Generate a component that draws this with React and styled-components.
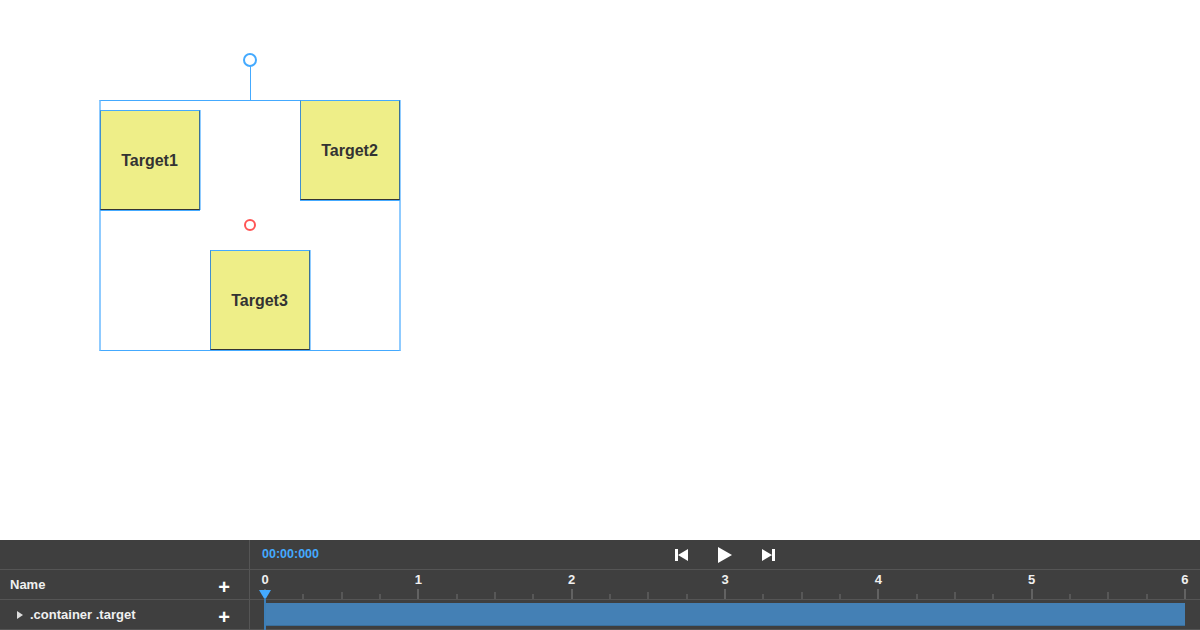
import React from 'react';
import styled, { createGlobalStyle } from 'styled-components';

const GlobalStyle = createGlobalStyle`
    html, body {
        margin: 0;
        padding: 0;
        background: #ffffff;
    }
    body {
        font-family: "Liberation Sans", Arial, sans-serif;
    }
`

const Page = styled.div`
    width: 1200px;
    height: 630px;
    display: flex;
    flex-direction: column;
    overflow: hidden;
`

const Stage = styled.div`
    position: relative;
    flex: 0 0 540px;
`

const Selection = styled.div`
    position: absolute;
    left: 99px;
    top: 100px;
    width: 302px;
    height: 251px;
    box-sizing: border-box;
    border-top: 1px solid #44aaff;
    border-bottom: 1px solid #44aaff;
    border-left: 2px solid #8fcbff;
    border-right: 2px solid #8fcbff;
`

const RotationLine = styled.div`
    position: absolute;
    left: 250px;
    top: 66px;
    width: 1px;
    height: 34px;
    background: #44aaff;
`

const RotationHandle = styled.div`
    position: absolute;
    left: 243px;
    top: 53px;
    width: 14px;
    height: 14px;
    box-sizing: border-box;
    border: 2px solid #44aaff;
    border-radius: 50%;
    background: #fff;
`

const Origin = styled.div`
    position: absolute;
    left: 244px;
    top: 219px;
    width: 12px;
    height: 12px;
    box-sizing: border-box;
    border: 2px solid #ff5555;
    border-radius: 50%;
`

const Target = styled.div`
    position: absolute;
    left: ${props => props.$x}px;
    top: ${props => props.$y}px;
    width: 100px;
    height: 100px;
    box-sizing: border-box;
    display: flex;
    align-items: center;
    justify-content: center;
    padding: 2px 1px 0 0;
    background: #eeee88;
    color: #333333;
    font-size: 16px;
    font-weight: bold;
    border: 1px solid #44aaff;
    border-left-color: #3f8fd0;
    border-right-color: #3a6f96;
    border-bottom-color: #333333;
    box-shadow: 0 1px 0 #44aaff, 1px 0 0 #8fcbff;
`

const Timeline = styled.div`
    flex: 0 0 90px;
    position: relative;
    display: flex;
    flex-direction: column;
    background: #3f3f3f;
    color: #ffffff;
    font-size: 13px;
    font-weight: bold;
`

const Row = styled.div`
    flex: 0 0 30px;
    box-sizing: border-box;
    display: flex;
    border-bottom: 1px solid #555555;
`

const Side = styled.div`
    flex: 0 0 250px;
    box-sizing: border-box;
    display: flex;
    align-items: center;
    justify-content: space-between;
    padding: 0 20px 0 ${props => props.$indent || 10}px;
    border-right: 1px solid #555555;
`

const SideLabel = styled.div`
    display: flex;
    align-items: center;
    gap: 7px;
    color: #f0f0f0;
`

const Caret = styled.span`
    width: 0;
    height: 0;
    border-left: 6px solid #dddddd;
    border-top: 4px solid transparent;
    border-bottom: 4px solid transparent;
`

const AddButton = styled.span`
    width: 10px;
    display: flex;
    justify-content: center;
    font-size: 20px;
    line-height: 18px;
    margin-top: 4px;
`

const Controls = styled.div`
    flex: 1;
    position: relative;
    display: flex;
    align-items: center;
    justify-content: center;
    gap: 28px;
`

const Clock = styled.div`
    position: absolute;
    left: 12px;
    top: 7px;
    color: #44aaff;
    font-size: 12.5px;
    line-height: 15px;
`

const ControlIcon = styled.svg`
    display: block;
    fill: #ffffff;
`

const Ruler = styled.div`
    flex: 1;
    position: relative;
    padding: 0 15px;
`

const Labels = styled.div`
    display: flex;
    justify-content: space-between;
    padding-top: 2px;
    line-height: 15px;
    color: #f0f0f0;
`

const Label = styled.span`
    width: 0;
    display: flex;
    justify-content: center;
`

const Ticks = styled.div`
    position: absolute;
    left: 14px;
    right: 14px;
    bottom: 0;
    display: flex;
    justify-content: space-between;
    align-items: flex-end;
`

const Tick = styled.span`
    width: 2px;
    height: ${props => props.$major ? 10 : props.$mid ? 7 : 5}px;
    background: ${props => props.$major ? '#626262' : '#575757'};
`

const Playhead = styled.div`
    position: absolute;
    left: 9px;
    bottom: -1px;
    width: 0;
    height: 0;
    border-left: 6px solid transparent;
    border-right: 6px solid transparent;
    border-top: 10px solid #44aaff;
`

const PlayheadLine = styled.div`
    position: absolute;
    left: 264px;
    top: 58px;
    bottom: 0;
    width: 2px;
    background: #3d7fb8;
`

const Track = styled.div`
    flex: 1;
    display: flex;
    padding: 3px 15px 3px;
`

const Bar = styled.div`
    flex: 1;
    background: #4480b5;
    border-bottom: 1px solid #3a6f9c;
`

const targets = [
    { name: 'Target1', x: 0, y: 10 },
    { name: 'Target2', x: 200, y: 0 },
    { name: 'Target3', x: 110, y: 150 },
]

const App = function(){
    const ticks = Array.from({ length: 25 }, (_, i) => i);
    return(
    <Page>
        <GlobalStyle />
        <Stage>
            <RotationLine />
            <RotationHandle />
            <Selection>
                {targets.map(t => (
                    <Target key={t.name} $x={t.x - 1} $y={t.y - 1}>{t.name}</Target>
                ))}
            </Selection>
            <Origin />
        </Stage>
        <Timeline>
            <Row>
                <Side />
                <Controls>
                    <Clock>00:00:000</Clock>
                    <ControlIcon width="14" height="12" viewBox="0 0 14 12">
                        <path d="M0 0h3v12H0zM3 6l10-6v12z" />
                    </ControlIcon>
                    <ControlIcon width="16" height="16" viewBox="0 0 16 16">
                        <path d="M1 0l14 8-14 8z" />
                    </ControlIcon>
                    <ControlIcon width="14" height="12" viewBox="0 0 14 12">
                        <path d="M11 0h3v12h-3zM11 6L1 0v12z" />
                    </ControlIcon>
                </Controls>
            </Row>
            <Row>
                <Side>
                    <SideLabel>Name</SideLabel>
                    <AddButton>+</AddButton>
                </Side>
                <Ruler>
                    <Labels>
                        {[0, 1, 2, 3, 4, 5, 6].map(n => <Label key={n}>{n}</Label>)}
                    </Labels>
                    <Ticks>
                        {ticks.map(i => <Tick key={i} $major={i % 4 === 0} $mid={i % 2 === 0} />)}
                    </Ticks>
                    <Playhead />
                </Ruler>
            </Row>
            <Row>
                <Side $indent={17}>
                    <SideLabel><Caret />.container .target</SideLabel>
                    <AddButton>+</AddButton>
                </Side>
                <Track><Bar /></Track>
            </Row>
            <PlayheadLine />
        </Timeline>
    </Page>
    );
}

export default App;
